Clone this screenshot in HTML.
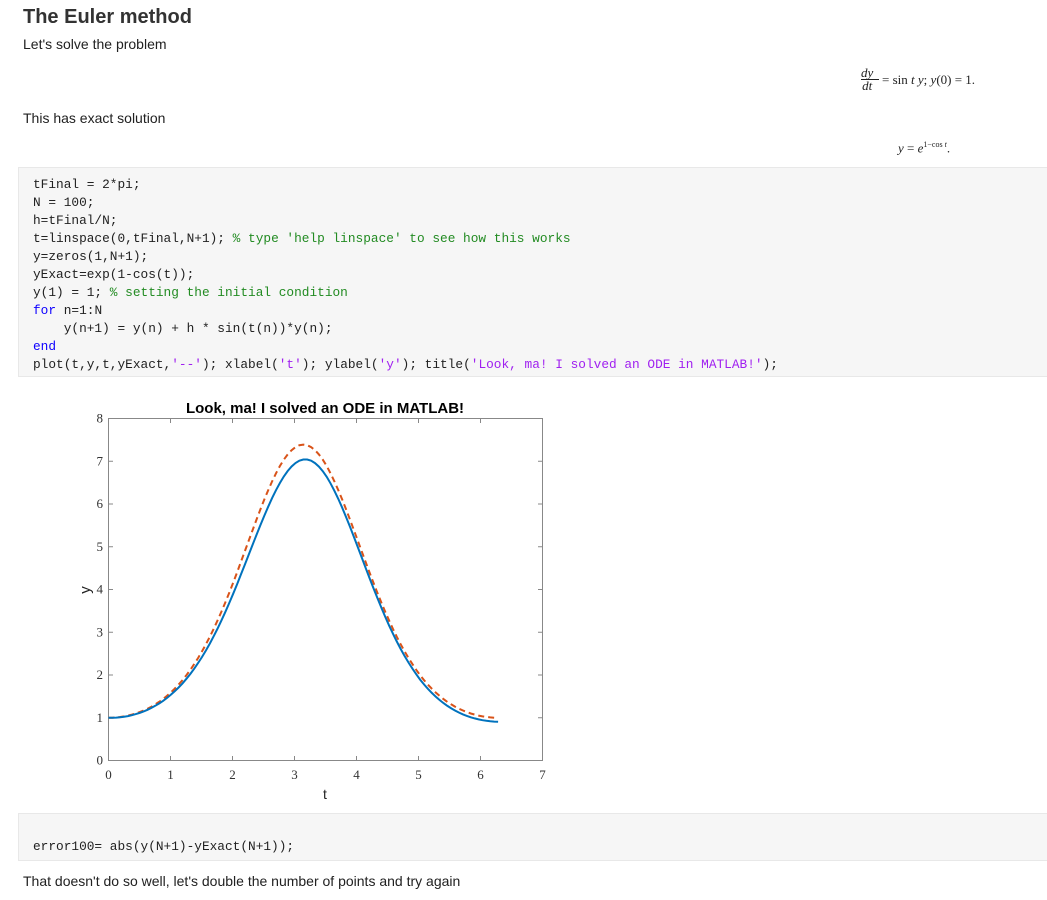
<!DOCTYPE html>
<html><head><meta charset="utf-8"><style>
body{margin:0;width:1047px;height:900px;background:#fff;position:relative;overflow:hidden;font-family:"Liberation Sans",Arial,sans-serif;color:#212121}
.a{position:absolute;white-space:pre}
h1{position:absolute;left:23px;top:6px;margin:0;font-size:20px;font-weight:bold;color:#333}
.p{font-size:14px}
.code{position:absolute;left:18px;right:0;background:#f6f6f6;border:1px solid #e8e8e8;border-right:none}
.code pre{margin:0;font-family:"Liberation Mono",monospace;font-size:12.8px;line-height:18px;color:#212121;position:absolute;left:14px}
.k{color:#0e00ff}.c{color:#228b22}.s{color:#a020f0}
.m{font-family:"Liberation Serif",serif;font-size:13px;color:#222}
</style></head><body>
<h1>The Euler method</h1>
<div class="a p" style="left:23px;top:36px">Let's solve the problem</div>
<div class="a m" style="left:861px;top:66px;text-align:center;line-height:13px"><i>dy</i><br><i>dt</i></div>
<div class="a" style="left:861px;top:79px;width:18px;border-top:1px solid #222"></div>
<div class="a m" style="left:882px;top:72px">= sin <i>t y</i>; <i>y</i>(0) = 1.</div>
<div class="a p" style="left:23px;top:110px">This has exact solution</div>
<div class="a m" style="left:898px;top:140px"><i>y</i> = <i>e</i><sup style="font-size:8px">1−cos <i>t</i></sup>.</div>
<div class="code" style="top:167px;height:208px"><pre style="top:8px">tFinal = 2*pi;
N = 100;
h=tFinal/N;
t=linspace(0,tFinal,N+1); <span class="c">% type 'help linspace' to see how this works</span>
y=zeros(1,N+1);
yExact=exp(1-cos(t));
y(1) = 1; <span class="c">% setting the initial condition</span>
<span class="k">for</span> n=1:N
    y(n+1) = y(n) + h * sin(t(n))*y(n);
<span class="k">end</span>
plot(t,y,t,yExact,<span class="s">'--'</span>); xlabel(<span class="s">'t'</span>); ylabel(<span class="s">'y'</span>); title(<span class="s">'Look, ma! I solved an ODE in MATLAB!'</span>);</pre></div>
<svg class="a" style="left:0;top:0" width="1047" height="900" id="sv">
<rect x="108.5" y="418.5" width="434" height="342" fill="#fff" stroke="#888" stroke-width="1"/>
<g id="ticks" stroke="#888" stroke-width="1"></g>
<g id="lbl" font-family="Liberation Serif,serif" font-size="13" fill="#333"></g>
<path id="ex" fill="none" stroke="#d95319" stroke-width="2" stroke-dasharray="6,4"/>
<path id="eu" fill="none" stroke="#0072bd" stroke-width="2"/>
<text x="325" y="413" text-anchor="middle" font-family="Liberation Sans,sans-serif" font-weight="bold" font-size="15" fill="#000">Look, ma! I solved an ODE in MATLAB!</text>
<text x="325" y="799" text-anchor="middle" font-family="Liberation Sans,sans-serif" font-size="14" fill="#222">t</text>
<text transform="translate(90,590) rotate(-90)" text-anchor="middle" font-family="Liberation Sans,sans-serif" font-size="15" fill="#222">y</text>
</svg>
<div class="code" style="top:813px;height:46px"><pre style="top:24px">error100= abs(y(N+1)-yExact(N+1));</pre></div>
<div class="a p" style="left:23px;top:873px">That doesn't do so well, let's double the number of points and try again</div>
<script>
var X0=108.5,XS=62,Y0=760.5,YS=42.75;
function px(t){return X0+t*XS}function py(y){return Y0-y*YS}
var tk='',lb='';
for(var i=0;i<=7;i++){var x=px(i);tk+='<line x1="'+x+'" y1="760.5" x2="'+x+'" y2="756"/><line x1="'+x+'" y1="418.5" x2="'+x+'" y2="423"/>';lb+='<text x="'+x+'" y="779" text-anchor="middle">'+i+'</text>';}
for(var j=0;j<=8;j++){var y=py(j);tk+='<line x1="108.5" y1="'+y+'" x2="113" y2="'+y+'"/><line x1="542.5" y1="'+y+'" x2="538" y2="'+y+'"/>';lb+='<text x="103" y="'+(y+4)+'" text-anchor="end">'+j+'</text>';}
document.getElementById('ticks').innerHTML=tk;document.getElementById('lbl').innerHTML=lb;
var N=100,T=2*Math.PI,h=T/N,yv=1,d1='',d2='';
for(var n=0;n<=N;n++){var t=n*h;d1+=(n?'L':'M')+px(t).toFixed(1)+' '+py(yv).toFixed(1);d2+=(n?'L':'M')+px(t).toFixed(1)+' '+py(Math.exp(1-Math.cos(t))).toFixed(1);yv=yv+h*Math.sin(t)*yv;}
document.getElementById('eu').setAttribute('d',d1);document.getElementById('ex').setAttribute('d',d2);
</script>
</body></html>
